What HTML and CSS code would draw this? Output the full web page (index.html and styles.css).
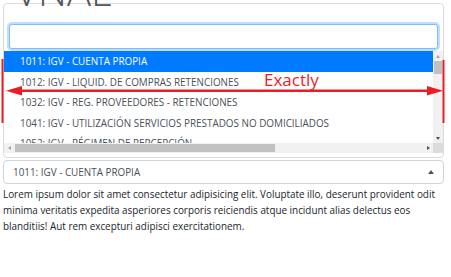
FILE: index.html
```html
<!DOCTYPE html>
<html>
  <head>
    <meta charset="utf-8" />
    <title>Select dropdown width</title>
    <link rel="stylesheet" href="styles.css">
  </head>
  <body>
    <h1 class="page-title">VNAL</h1>

    <div class="dropdown">
      <div class="dropdown-search">
        <input class="search-field" type="search" />
      </div>
      <div class="results">
        <ul class="options">
          <li class="option active">1011: IGV - CUENTA PROPIA</li>
          <li class="option">1012: IGV - LIQUID. DE COMPRAS RETENCIONES</li>
          <li class="option">1032: IGV - REG. PROVEEDORES - RETENCIONES</li>
          <li class="option">1041: IGV - UTILIZACIÓN SERVICIOS PRESTADOS NO DOMICILIADOS</li>
          <li class="option">1052: IGV - RÉGIMEN DE PERCEPCIÓN</li>
        </ul>
        <div class="vscroll">
          <span class="sb-btn"><i class="tri tri-up"></i></span>
          <span class="vthumb"></span>
          <span class="sb-fill"></span>
          <span class="sb-btn"><i class="tri tri-down"></i></span>
        </div>
        <div class="hscroll">
          <span class="sb-btn"><i class="tri tri-left"></i></span>
          <span class="hthumb"></span>
          <span class="sb-fill"></span>
          <span class="sb-btn"><i class="tri tri-right"></i></span>
        </div>
        <div class="sb-corner"></div>
      </div>
    </div>

    <div class="select">
      <span class="select-value">1011: IGV - CUENTA PROPIA</span>
      <span class="select-arrow"></span>
    </div>

    <p class="text">
      Lorem ipsum dolor sit amet consectetur adipisicing elit. Voluptate illo,
      deserunt provident odit minima veritatis expedita asperiores corporis
      reiciendis atque incidunt alias delectus eos blanditiis! Aut rem
      excepturi adipisci exercitationem.
    </p>

    <!-- red markup drawn over the screenshot -->
    <svg class="annotation" width="451" height="277" viewBox="0 0 451 277">
      <rect x="1.5" y="59" width="2" height="64" fill="#ed1c24" />
      <rect x="442.5" y="60" width="2" height="63" fill="#ed1c24" />
      <rect x="18" y="89.5" width="412" height="2.5" fill="#ed1c24" />
      <polygon points="6,90.7 22,86 22,95.5" fill="#ed1c24" />
      <polygon points="443,90.7 427,86 427,95.5" fill="#ed1c24" />
      <text x="264" y="86" class="annotation-text">Exactly</text>
    </svg>
  </body>
</html>
```

FILE: styles.css
```css
body {
  font-family: "Open Sans", "Noto Sans", sans-serif;
  font-size: 9.9px;
  color: #212529;
  margin: 0 7px 0 3px;
}
.page-title {
  position: relative;
  z-index: 1;
  margin: -29px 0 0 12px;
  font-size: 40px;
  font-weight: 300;
  line-height: 40px;
  height: 40px;
  color: #555;
}
.dropdown {
  margin-top: -8px;
  background: #fff;
  border: 1px solid #dadada;
  border-radius: 4px;
  padding-bottom: 4px;
}
.dropdown-search {
  padding: 20px 5px 2px;
}
.search-field {
  display: block;
  box-sizing: border-box;
  width: 100%;
  height: 25px;
  margin: 0;
  border: 1px solid #80bdff;
  border-radius: 3px;
  box-shadow: 0 0 0 2px rgba(0, 123, 255, 0.25);
  outline: none;
}
.results {
  display: grid;
  grid-template-columns: 1fr 10px;
  grid-template-rows: 92px 10px;
}
.options {
  list-style: none;
  margin: 0;
  padding: 0;
  overflow: hidden;
  white-space: nowrap;
}
.option {
  height: 20.6px;
  line-height: 20.6px;
  padding: 0 16px;
  color: #495057;
}
.option.active {
  background: #007bff;
  color: #fff;
}
.vscroll,
.hscroll {
  display: flex;
  background: #f1f1f1;
}
.vscroll {
  flex-direction: column;
}
.sb-btn {
  flex: 0 0 10px;
  height: 10px;
  display: flex;
  align-items: center;
  justify-content: center;
}
.sb-fill {
  flex: 1;
}
.vthumb {
  height: 13px;
  margin: 0 1px;
  background: #c1c1c1;
}
.hthumb {
  width: 260px;
  margin: 1px 0 1px 1px;
  background: #c1c1c1;
}
.sb-corner {
  background: #dcdcdc;
}
.tri {
  width: 0;
  height: 0;
  border: 0 solid transparent;
}
.tri-up {
  border-width: 0 2.5px 3px;
  border-bottom-color: #a3a3a3;
}
.tri-down {
  border-width: 3px 2.5px 0;
  border-top-color: #505050;
}
.tri-left {
  border-width: 2.5px 3px 2.5px 0;
  border-right-color: #a3a3a3;
}
.tri-right {
  border-width: 2.5px 0 2.5px 3px;
  border-left-color: #505050;
}
.select {
  margin-top: 2px;
  height: 24px;
  box-sizing: border-box;
  border: 1px solid #ced4da;
  border-radius: 4px;
  padding: 0 9px;
  display: flex;
  align-items: center;
  justify-content: space-between;
  color: #495057;
}
.select-arrow {
  width: 0;
  height: 0;
  border-style: solid;
  border-width: 0 3.5px 4px;
  border-color: transparent transparent #555 transparent;
}
.text {
  margin: 2px 0 0;
  line-height: 16px;
}
.annotation {
  position: absolute;
  top: 0;
  left: 0;
  z-index: 2;
  pointer-events: none;
}
.annotation-text {
  font-family: "Open Sans", sans-serif;
  font-size: 17px;
  fill: #ed1c24;
}
```
